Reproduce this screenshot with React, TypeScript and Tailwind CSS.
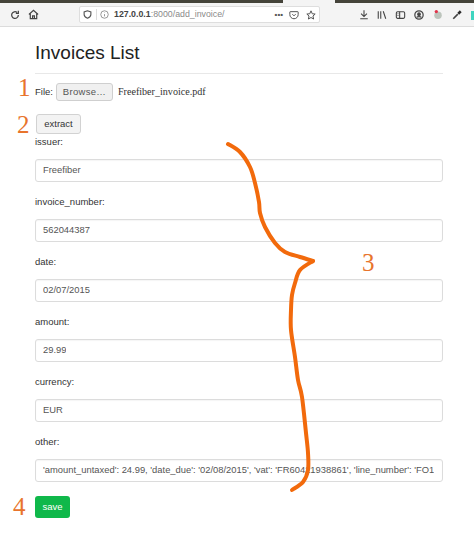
import React from "react";

const sans = "font-['Liberation_Sans',Arial,sans-serif]";

function Field({ label, value }: { label: string; value: string }) {
  return (
    <div className="flex flex-col">
      <div className="h-[17px] text-[9.5px] leading-[17px] text-[#333]">{label}:</div>
      <div className="h-[23px] mt-[9px] mb-[11px] border border-[#dcdcdc] rounded-[3px] bg-white flex items-center pl-[7px] pr-[6px] shadow-[inset_0_1px_1px_rgba(0,0,0,0.04)]">
        <span className="block overflow-hidden text-[9.4px] text-[#555] whitespace-nowrap">{value}</span>
      </div>
    </div>
  );
}

function BrowserBar() {
  return (
    <div className="h-[27px] bg-[#f4f4f4] border-b border-[#dcdcdc] relative flex items-center">
      <div className="absolute left-0 right-0 top-0 h-[3px] bg-[#45443a]" />
      <div className="absolute left-[283px] top-0 h-[3px] w-[52px] bg-[#f4f4f4]" />
      <svg className="ml-[10px] mt-[3px]" width="10" height="10" viewBox="0 0 24 24" fill="none" stroke="#444" strokeWidth="3"><path d="M20 12a8 8 0 1 1-3-6.2" /><path d="M20 2v6h-6" /></svg>
      <svg className="ml-[8px] mt-[3px]" width="11" height="11" viewBox="0 0 24 24" fill="none" stroke="#444" strokeWidth="2.6"><path d="M2 12 12 3l10 9" /><path d="M5 10v11h14V10" /><path d="M10 21v-6h4v6" /></svg>
      <div className="ml-[40px] mt-[3px] w-[241px] h-[17px] bg-white border border-[#dedede] rounded-[2px] flex items-center">
        <svg className="ml-[3px]" width="9" height="9" viewBox="0 0 24 24" fill="none" stroke="#555" strokeWidth="3"><path d="M12 2 3 5v7c0 5 4 8 9 10 5-2 9-5 9-10V5z" /></svg>
        <div className="w-px h-[11px] bg-[#ddd] ml-[4px]" />
        <svg className="ml-[3px]" width="9" height="9" viewBox="0 0 24 24" fill="none" stroke="#777" strokeWidth="2"><circle cx="12" cy="12" r="10" /><path d="M12 11v6M12 7v1" /></svg>
        <span className="ml-[5px] text-[8.8px] font-bold text-[#444] whitespace-nowrap leading-none">127.0.0.1<span className="font-normal text-[#8a8a8a]">:8000/add_invoice/</span></span>
        <span className="ml-auto text-[8px] font-bold text-[#555] leading-none">•••</span>
        <svg className="ml-[6px]" width="10" height="10" viewBox="0 0 24 24" fill="none" stroke="#555" strokeWidth="2.4"><path d="M3 4h18a1 1 0 0 1 1 1v6a10 10 0 0 1-20 0V5a1 1 0 0 1 1-1z" /><path d="m8 10 4 4 4-4" /></svg>
        <svg className="ml-[7px] mr-[3px]" width="10" height="10" viewBox="0 0 24 24" fill="none" stroke="#555" strokeWidth="2.4"><path d="m12 2 3 7 7 .7-5.300 4.800 1.600 7.200L12 18l-6.300 3.700 1.600-7.200L2 9.700 9 9z" /></svg>
      </div>
      <svg className="ml-[39px] mt-[3px]" width="10" height="11" viewBox="0 0 24 24" fill="none" stroke="#444" strokeWidth="2.6"><path d="M12 2v14M5 10l7 7 7-7M3 22h18" /></svg>
      <svg className="ml-[8px] mt-[3px]" width="10" height="10" viewBox="0 0 24 24" fill="none" stroke="#444" strokeWidth="2.6"><path d="M3 3v18M9 3v18M15 3l6 18" /></svg>
      <svg className="ml-[8px] mt-[3px]" width="11" height="10" viewBox="0 0 24 24" fill="none" stroke="#444" strokeWidth="2.6"><rect x="2" y="4" width="20" height="16" rx="3" /><path d="M10 4v16M5 9h2M5 13h2" /></svg>
      <svg className="ml-[8px] mt-[3px]" width="10" height="10" viewBox="0 0 24 24" fill="none" stroke="#444" strokeWidth="3"><circle cx="12" cy="12" r="10" /><circle cx="12" cy="10" r="3" fill="#444" /><path d="M6 18c2-3 10-3 12 0" /></svg>
      <svg className="ml-[9px] mt-[3px]" width="10" height="11" viewBox="0 0 24 24"><circle cx="12" cy="14" r="9" fill="#bcc4bc" /><circle cx="8" cy="5" r="4" fill="#e0344a" /></svg>
      <svg className="ml-[9px] mt-[3px]" width="10" height="10" viewBox="0 0 24 24" fill="none" stroke="#444" strokeWidth="4"><path d="M3 21 14 10" /><path d="M15 9l6-6" stroke="#2a2a2a" strokeWidth="6" /></svg>
      <div className="absolute right-0 top-[11px] w-[3px] h-[9px] bg-[#3fd5c0]" />
    </div>
  );
}

const fields: [string, string][] = [
  ["issuer", "Freefiber"],
  ["invoice_number", "562044387"],
  ["date", "02/07/2015"],
  ["amount", "29.99"],
  ["currency", "EUR"],
  ["other", "'amount_untaxed': 24.99, 'date_due': '02/08/2015', 'vat': 'FR60421938861', 'line_number': 'FO1"],
];

function Digit({ n, className }: { n: string; className: string }) {
  return <span className={`absolute font-['Liberation_Serif',serif] text-[25px] leading-none text-[#e8742c] ${className}`}>{n}</span>;
}

function smooth(p: number[][]) {
  let d = `M${p[0][0]} ${p[0][1]}`;
  for (let i = 0; i < p.length - 1; i++) {
    const a = p[Math.max(i - 1, 0)], b = p[i], c = p[i + 1], e = p[Math.min(i + 2, p.length - 1)];
    d += ` C${b[0] + (c[0] - a[0]) / 6} ${b[1] + (c[1] - a[1]) / 6} ${c[0] - (e[0] - b[0]) / 6} ${c[1] - (e[1] - b[1]) / 6} ${c[0]} ${c[1]}`;
  }
  return d;
}

const upper = [[228,144],[240,152],[250,167],[255,183],[259,202],[260,213],[265,227],[275,243],[285,252],[300,257],[313,261]];
const lower = [[313,261],[300,270],[295,283],[292,295],[291,310],[291,330],[295,357],[298,380],[302,397],[306,433],[308,453],[308,470],[303,482],[292,490]];

export default function App() {
  return (
    <div className={`relative w-[474px] h-[540px] bg-white overflow-hidden ${sans}`}>
      <BrowserBar />
      <div className="pl-[35px] pr-[31px]">
        <h1 className="mt-[14px] text-[19px] leading-[24px] text-[#222] font-normal">Invoices List</h1>
        <div className="mt-[8px] border-t border-[#e8e8e8]" />
        <div className="mt-[9px] h-[18px] flex items-center text-[9.5px] text-[#333]">
          <span>File:</span>
          <span className="ml-[3px] w-[57px] h-[18px] rounded-[3px] border border-[#cfcfcf] bg-[#f0f0f0] text-[#555] flex items-center justify-center tracking-[0.3px]">Browse…</span>
          <span className="ml-[5px] font-['Liberation_Serif',serif] text-[10.1px] text-[#333]">Freefiber_invoice.pdf</span>
        </div>
        <div className="mt-[13px] ml-px w-[45px] h-[20px] rounded-[3px] border border-[#d2d2d2] bg-[#f3f3f3] text-[9.5px] text-[#333] flex items-center justify-center">extract</div>
        <div className="mt-[-1px]">
          {fields.map(([l, v]) => (
            <Field key={l} label={l} value={v} />
          ))}
        </div>
        <div className="mt-[3px] w-[35px] h-[22px] rounded-[3px] bg-[#0fb84a] text-white text-[9.5px] flex items-center justify-center">save</div>
      </div>
      <Digit n="1" className="left-[18px] top-[75px]" />
      <Digit n="2" className="left-[17px] top-[112px]" />
      <Digit n="3" className="left-[362px] top-[250px]" />
      <Digit n="4" className="left-[13px] top-[494px]" />
      <svg className="absolute left-0 top-0 pointer-events-none" width="474" height="540" viewBox="0 0 474 540" fill="none" stroke="#f26a0c" strokeWidth="4" strokeLinecap="round" strokeLinejoin="round">
        <path d={smooth(upper)} />
        <path d={smooth(lower)} />
      </svg>
    </div>
  );
}
